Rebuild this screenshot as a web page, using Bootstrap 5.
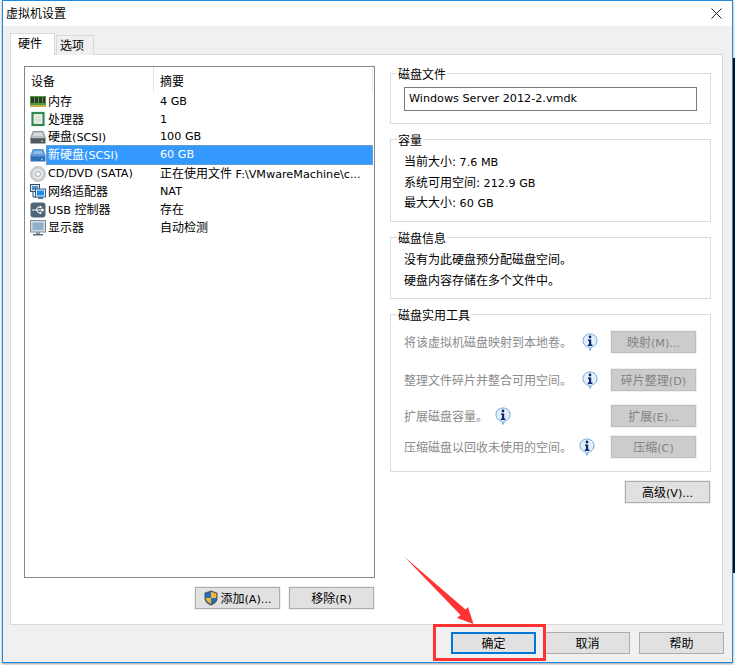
<!DOCTYPE html>
<html lang="zh-CN">
<head>
<meta charset="utf-8">
<title>虚拟机设置</title>
<link href="https://cdn.jsdelivr.net/npm/bootstrap@5.3.0/dist/css/bootstrap.min.css" rel="stylesheet">
<style>
html,body{height:665px;overflow:hidden;}
body{background:#f6f6f6;color:#000;font-family:"DejaVu Sans","Noto Sans CJK SC",sans-serif;font-size:11.2px;line-height:18px;position:relative;}
.right-edge{position:absolute;left:733px;top:58px;width:2px;height:515px;background:#111;}
.vm-win{margin-left:2px;width:731px;height:663px;border:1px solid #1b8ae0;background:#f0f0f0;box-shadow:0 1px 2px rgba(0,0,0,.35);}
.vm-title{height:25px;background:#fff;padding-left:3px;font-size:12px;}
.vm-close{width:11px;height:11px;margin-right:10px;}
.vm-main{padding:7px 9px 0 7px;}
.vm-tabs{height:21px;border:0;gap:1px;position:relative;z-index:1;}
.vm-tab{display:block;height:20px;margin-top:2px;width:38px;padding-left:3px;background:#f0f0f0;border:1px solid #d9d9d9;border-bottom:0;color:#000;line-height:20px;text-decoration:none;}
.vm-tab.active{width:45px;height:22px;margin-top:0;padding-left:7px;background:#fff;line-height:20px;}
.vm-pane{height:571px;background:#fff;border:1px solid #d9d9d9;padding:11px 10px 0 13px;gap:15px;}
.left-col{width:351px;}
.right-col{width:321px;padding-top:7px;}
.dev-list{height:512px;border:1px solid #828790;border-radius:0;display:block;}
.dev-head{height:25px;line-height:30px;}
.dev-head .h1c{width:129px;padding-left:6px;border-right:1px solid #e5e5e5;}
.dev-head .h2c{flex:1;padding-left:6px;border-right:1px solid #e5e5e5;margin-right:1px;}
.dev-row{height:18.14px;padding:0 1px 0 5px;border:0;background:transparent;color:#000;border-radius:0!important;}
.dev-ico{width:16px;height:16px;flex:none;}
.dev-name{width:114px;padding:1px 0 0 2px;flex:none;white-space:nowrap;}
.dev-val{flex:1;white-space:nowrap;padding-top:1px;}
.dev-sel{flex:1;display:flex;background:#3399ff;color:#fff;outline:1px dotted rgba(220,170,90,.6);outline-offset:-1px;}
.plain{flex:1;display:flex;}
.win-btn{width:85px;height:22px;padding:0;border:1px solid #adadad;background:#e1e1e1;color:#000;border-radius:0;font-size:11.2px;line-height:23px;box-shadow:0 0 0 1px #f0f0f0;}
.win-btn:hover{background:#e1e1e1;color:#000;border-color:#adadad;}
.win-btn.is-def{border:2px solid #0078d7;line-height:21px;}
.win-btn[disabled]{background:#ccc;border-color:#bfbfbf;color:#838383;opacity:1;box-shadow:0 0 0 1px #f0f0f0;}
.shield{width:16px;height:16px;margin-right:1px;vertical-align:-3px;}
.left-btns{margin-top:9px;padding-right:1px;gap:9px;}
.grp{position:relative;border:1px solid #dcdcdc;margin-bottom:15px;padding:0 13px;}
.grp-label{position:absolute;top:-8px;left:6px;background:#fff;padding:0 1px;font-size:12px;line-height:18px;}
.grp-file{height:51px;padding-top:13px;}
.file-box{height:24px;border:1px solid #7a7a7a;line-height:21px;padding-left:4px;}
.grp-size{height:83px;padding-top:12px;}
.grp-info{height:62px;padding-top:12px;}
.info-line{height:20.7px;line-height:20px;}
.grp-tool{height:158px;color:#8a8a8a;margin-bottom:9px;padding-right:14px;}
.tool-row{height:22px;font-size:12px;}
.tool-txt{padding-top:2px;}
.r1,.r2{margin-top:16px;}
.r3{margin-top:14px;}
.r4{margin-top:9px;}
.info{width:16px;height:18px;flex:none;}
.g10{margin-left:10px;}.g7{margin-left:7px;}
.adv-row{padding-right:1px;}
.vm-foot{padding:6px 8px 0 0;gap:9px;}
.mark-box{position:absolute;left:433px;top:624px;width:113px;height:37px;border:3px solid #f33;pointer-events:none;}
.mark-arrow{position:absolute;left:400px;top:550px;width:80px;height:80px;pointer-events:none;}
.cjk12{font-size:12px;}
</style>
</head>
<body>
<div class="right-edge"></div>
<div class="vm-win d-flex flex-column">
  <div class="vm-title d-flex align-items-center justify-content-between">
    <span>虚拟机设置</span>
    <svg class="vm-close" viewBox="0 0 11 11"><path d="M.5.5l10 10M10.5.5l-10 10" stroke="#222" fill="none"/></svg>
  </div>
  <div class="vm-main flex-grow-1 d-flex flex-column">
    <ul class="nav vm-tabs">
      <li class="nav-item"><a class="vm-tab active cjk12" href="#">硬件</a></li>
      <li class="nav-item"><a class="vm-tab cjk12" href="#">选项</a></li>
    </ul>
    <div class="vm-pane d-flex">
      <div class="left-col">
        <div class="dev-list list-group">
          <div class="dev-head d-flex cjk12"><div class="h1c">设备</div><div class="h2c">摘要</div></div>
          <div class="list-group-item dev-row d-flex align-items-center">
            <svg class="dev-ico" viewBox="0 0 16 16"><rect x="0" y="3" width="16" height="9" fill="#4f9a3c"/><rect x="0" y="12" width="16" height="2" fill="#c9b04e"/><rect x="1" y="4" width="3" height="6" fill="#2e3a2c"/><rect x="5" y="4" width="3" height="6" fill="#2e3a2c"/><rect x="9" y="4" width="3" height="6" fill="#2e3a2c"/><rect x="13" y="4" width="2" height="6" fill="#2e3a2c"/></svg>
            <div class="plain"><span class="dev-name cjk12">内存</span><span class="dev-val">4 GB</span></div>
          </div>
          <div class="list-group-item dev-row d-flex align-items-center">
            <svg class="dev-ico" viewBox="0 0 16 16"><rect x="2.500" y="2" width="11" height="12" fill="#f2f4ee" stroke="#2f8a52" stroke-width="2.200"/><rect x="5" y="4.500" width="6" height="7" fill="#dfe2da"/></svg>
            <div class="plain"><span class="dev-name cjk12">处理器</span><span class="dev-val">1</span></div>
          </div>
          <div class="list-group-item dev-row d-flex align-items-center">
            <svg class="dev-ico" viewBox="0 0 16 16"><path d="M3 2.500h10l2.500 7H.5z" fill="#b7bec5" stroke="#6e757c" stroke-width=".7"/><path d="M4 4h8l1 3H3z" fill="#d7dce0"/><rect x=".5" y="9.500" width="15" height="5" fill="#4e565e"/><rect x="11" y="11.500" width="2" height="1.500" fill="#7fd06a"/></svg>
            <div class="plain"><span class="dev-name"><span class="cjk12">硬盘</span>(SCSI)</span><span class="dev-val">100 GB</span></div>
          </div>
          <div class="list-group-item dev-row d-flex align-items-center">
            <svg class="dev-ico" viewBox="0 0 16 16"><path d="M3 2.500h10l2.500 7H.5z" fill="#5f9ad8" stroke="#3f78b8" stroke-width=".7"/><path d="M4 4h8l1 3H3z" fill="#8fbce8"/><rect x=".5" y="9.500" width="15" height="5" fill="#2f6fb8"/><rect x="11" y="11.500" width="2" height="1.500" fill="#7fc0e0"/></svg>
            <div class="dev-sel"><span class="dev-name"><span class="cjk12">新硬盘</span>(SCSI)</span><span class="dev-val">60 GB</span></div>
          </div>
          <div class="list-group-item dev-row d-flex align-items-center">
            <svg class="dev-ico" viewBox="0 0 16 16"><circle cx="8" cy="8" r="7.500" fill="#cfd2d4" stroke="#a9adb1" stroke-width=".7"/><circle cx="8" cy="8" r="5" fill="#e6e8ea"/><circle cx="8" cy="8" r="2.500" fill="#fff" stroke="#8f9499" stroke-width=".8"/></svg>
            <div class="plain"><span class="dev-name">CD/DVD (SATA)</span><span class="dev-val"><span class="cjk12">正在使用文件</span> F:\VMwareMachine\c...</span></div>
          </div>
          <div class="list-group-item dev-row d-flex align-items-center">
            <svg class="dev-ico" viewBox="0 0 16 16"><rect x=".5" y=".5" width="9" height="7" fill="#dfe7ef" stroke="#2f4f70"/><rect x="2" y="2" width="6" height="4" fill="#5b8fc4"/><path d="M3 8v5h3" stroke="#2f4f70" fill="none"/><rect x="5.500" y="5" width="10" height="8" fill="#e8f0f7" stroke="#2c608f"/><rect x="7" y="6.500" width="7" height="5" fill="#1f8fe8"/><rect x="8" y="13" width="5" height="2" fill="#4f7696"/></svg>
            <div class="plain"><span class="dev-name cjk12">网络适配器</span><span class="dev-val">NAT</span></div>
          </div>
          <div class="list-group-item dev-row d-flex align-items-center">
            <svg class="dev-ico" viewBox="0 0 16 16"><rect x=".5" y=".5" width="15" height="15" rx="3" fill="#4e6478"/><path d="M2 8h10M6 8l2-3h2M6.500 8l2 3h2" stroke="#fff" fill="none"/><path d="M11.500 6l3 2-3 2z" fill="#fff"/><rect x="9.500" y="4" width="2" height="2" fill="#fff"/><circle cx="10.500" cy="11" r="1" fill="#fff"/></svg>
            <div class="plain"><span class="dev-name">USB <span class="cjk12">控制器</span></span><span class="dev-val cjk12">存在</span></div>
          </div>
          <div class="list-group-item dev-row d-flex align-items-center">
            <svg class="dev-ico" viewBox="0 0 16 16"><rect x=".5" y=".5" width="15" height="11.500" fill="#d4dbe1" stroke="#7f8c98"/><rect x="2.500" y="2.500" width="11" height="7.500" fill="#8fb0cd"/><rect x="6" y="12" width="4" height="2" fill="#8d99a4"/><rect x="3" y="14" width="10" height="1.500" fill="#5f6b75"/></svg>
            <div class="plain"><span class="dev-name cjk12">显示器</span><span class="dev-val cjk12">自动检测</span></div>
          </div>
        </div>
        <div class="left-btns d-flex justify-content-end">
          <button class="btn win-btn" type="button"><svg class="shield" viewBox="0 0 16 16"><path d="M8 .5l6.500 2.200v5.500c0 3.400-3 6-6.500 7.300C4.500 14.200 1.500 11.600 1.500 8.200V2.700z" fill="#4d5763"/><path d="M8 1.800V8H2.700V3.400z" fill="#1f6fc4"/><path d="M8 1.800l5.300 1.600V8H8z" fill="#f5b82e"/><path d="M8 8h5.300c-.2 2.700-2.600 4.700-5.300 5.900z" fill="#1f6fc4"/><path d="M8 8v5.900C5.300 12.700 2.900 10.700 2.700 8z" fill="#f5b82e"/></svg><span class="cjk12">添加</span>(A)...</button>
          <button class="btn win-btn" type="button"><span class="cjk12">移除</span>(R)</button>
        </div>
      </div>
      <div class="right-col">
        <div class="grp grp-file">
          <span class="grp-label">磁盘文件</span>
          <div class="file-box">Windows Server 2012-2.vmdk</div>
        </div>
        <div class="grp grp-size">
          <span class="grp-label">容量</span>
          <div class="info-line"><span class="cjk12">当前大小:</span> 7.6 MB</div>
          <div class="info-line"><span class="cjk12">系统可用空间:</span> 212.9 GB</div>
          <div class="info-line"><span class="cjk12">最大大小:</span> 60 GB</div>
        </div>
        <div class="grp grp-info">
          <span class="grp-label">磁盘信息</span>
          <div class="info-line cjk12">没有为此硬盘预分配磁盘空间。</div>
          <div class="info-line cjk12">硬盘内容存储在多个文件中。</div>
        </div>
        <div class="grp grp-tool">
          <span class="grp-label text-black">磁盘实用工具</span>
          <div class="tool-row r1 d-flex align-items-center"><span class="tool-txt">将该虚拟机磁盘映射到本地卷。</span><svg class="info g10" viewBox="0 0 16 18"><use href="#bubble"/></svg><button class="btn win-btn ms-auto" disabled type="button"><span class="cjk12">映射</span>(M)...</button></div>
          <div class="tool-row r2 d-flex align-items-center"><span class="tool-txt">整理文件碎片并整合可用空间。</span><svg class="info g10" viewBox="0 0 16 18"><use href="#bubble"/></svg><button class="btn win-btn ms-auto" disabled type="button"><span class="cjk12">碎片整理</span>(D)</button></div>
          <div class="tool-row r3 d-flex align-items-center"><span class="tool-txt">扩展磁盘容量。</span><svg class="info g7" viewBox="0 0 16 18"><use href="#bubble"/></svg><button class="btn win-btn ms-auto" disabled type="button"><span class="cjk12">扩展</span>(E)...</button></div>
          <div class="tool-row r4 d-flex align-items-center"><span class="tool-txt">压缩磁盘以回收未使用的空间。</span><svg class="info g7" viewBox="0 0 16 18"><use href="#bubble"/></svg><button class="btn win-btn ms-auto" disabled type="button"><span class="cjk12">压缩</span>(C)</button></div>
        </div>
        <div class="adv-row d-flex justify-content-end"><button class="btn win-btn" type="button"><span class="cjk12">高级</span>(V)...</button></div>
      </div>
    </div>
  </div>
  <div class="vm-foot d-flex justify-content-end">
    <button class="btn win-btn is-def cjk12" type="button">确定</button>
    <button class="btn win-btn cjk12" type="button">取消</button>
    <button class="btn win-btn cjk12" type="button">帮助</button>
  </div>
  <div class="pb-2"></div>
</div>
<div class="mark-box"></div>
<svg class="mark-arrow" viewBox="400 550 80 80"><polygon points="404,556.500 460.500,615 457,618 473.500,624 468,607 465.500,609.500" fill="#f33"/></svg>
<svg width="0" height="0" class="position-absolute"><defs>
  <g id="bubble"><path d="M8 1c4 0 7 2.800 7 6.500S12 14 9.500 14L8 17.500 6.800 14C4 14 1 11.200 1 7.500S4 1 8 1z" fill="#e3f0fb" stroke="#6fa8dc"/><circle cx="8" cy="4" r="1.400" fill="#122570"/><path d="M6 6.500h3.200v5h1.200v1.400H5.800v-1.400H7V7.900H6z" fill="#122570"/></g>
</defs></svg>
</body>
</html>
